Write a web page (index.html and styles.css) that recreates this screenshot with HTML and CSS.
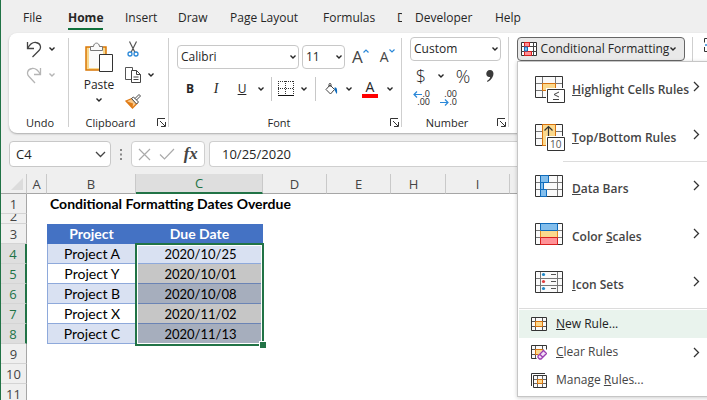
FILE: index.html
```html
<!DOCTYPE html>
<html lang="en">
<head>
<meta charset="utf-8">
<meta name="viewport" content="width=device-width, initial-scale=1">
<title>Conditional Formatting Dates Overdue</title>
<link rel="stylesheet" href="styles.css">
</head>
<body>
<svg class="defs" aria-hidden="true">
  <symbol id="chev" viewBox="0 0 8 6"><path d="M1.500 1.500 4 4l2.500-2.500" fill="none" stroke="currentColor" stroke-width="1.400"/></symbol>
  <symbol id="next" viewBox="0 0 7 11"><path d="m1 1 4.500 4.500L1 10" fill="none" stroke="#333" stroke-width="1.300"/></symbol>
  <symbol id="launch" viewBox="0 0 9 9"><path d="M.5 8V.5H8M3 3l5 5M8.500 4v4.500H4" fill="none" stroke="#333"/></symbol>
  <symbol id="cells" viewBox="0 0 28 22"><path d="M.5.5h27v21H.5z" fill="#fafafa"/><path d="M7.500 1v20M20.500 1v20M1 7.500h26M1 14.500h26" stroke="#777" fill="none"/></symbol>
</svg>
<div class="app">
  <nav class="tabs" aria-label="Ribbon tabs">
    <button>File</button><button class="active">Home</button><button>Insert</button><button>Draw</button><button>Page Layout</button><button>Formulas</button><button class="cut">D</button><button>Developer</button><button>Help</button>
  </nav>

  <main>
  <div class="ribbon">
    <section class="group undo">
      <div class="stack">
        <div class="line">
          <button aria-label="Undo"><svg width="16" height="17" viewBox="0 0 16 17"><path d="M1.500 1v6.500H8M1.500 7.500C4 3 7 1 10 1.500c5 .7 5.500 5.500 3 8L6.500 16" fill="none" stroke="#444" stroke-width="1.300"/></svg></button>
          <button aria-label="Undo history"><svg class="chev"><use href="#chev"/></svg></button>
        </div>
        <div class="line faded">
          <button aria-label="Redo"><svg width="16" height="17" viewBox="0 0 16 17"><path d="M14.500 1v6.500H8M14.500 7.500C12 3 9 1 6 1.500 1 2.200.5 7 3 9.500L9 16" fill="none" stroke="#b5b5b5" stroke-width="1.300"/></svg></button>
          <button aria-label="Redo history"><svg class="chev"><use href="#chev"/></svg></button>
        </div>
      </div>
      <footer>Undo</footer>
    </section>

    <section class="group clipboard">
      <div class="columns">
        <button class="paste">
          <svg width="28" height="31" viewBox="0 0 28 31"><path d="M1 5h20v23H1z" fill="#f8d88e" stroke="#d97706" stroke-width="1.500"/><path d="M4 6h14v20H4z" fill="#fafafa"/><path d="M5.500 8.500v-4h3c.3-4.500 5.700-4.500 6 0h3v4z" fill="#fafafa" stroke="#777"/><path d="M14.500 12.500h13v17h-13z" fill="#fff" stroke="#333"/></svg>
          <span>Paste</span>
          <svg class="chev"><use href="#chev"/></svg>
        </button>
        <div class="stack">
          <div class="line"><button aria-label="Cut"><svg width="16" height="16" viewBox="0 0 16 16"><path d="m4.500.5 5.500 11M11.500.5 6 11.500" fill="none" stroke="#555" stroke-width="1.200"/><g fill="#fff" stroke="#2b88d8" stroke-width="1.300"><circle cx="5" cy="13" r="2"/><circle cx="11" cy="13" r="2"/></g></svg></button></div>
          <div class="line">
            <button aria-label="Copy"><svg width="16" height="16" viewBox="0 0 16 16"><path d="M.5.5h7v12h-7z" fill="#fff" stroke="#555"/><path d="M6.500 3.500h5l4 4v8h-9z" fill="#fff" stroke="#444"/><path d="M11.500 3.500v4h4M8.500 10h5M8.500 12.500h5" fill="none" stroke="#444"/></svg></button>
            <button aria-label="Copy options"><svg class="chev"><use href="#chev"/></svg></button>
          </div>
          <div class="line"><button aria-label="Format Painter"><svg width="16" height="15" viewBox="0 0 16 15"><path d="m1 7 6-2.500 5 5L7.500 14z" fill="#f9c98b" stroke="#e07b16" stroke-width="1.300"/><path d="m1 7 7 2.500L7.500 14" fill="#e07b16"/><path d="m6.500 4.500 2-1.500 5 5-2 2zM10 4.500l4-4 1.500 1.500-4 4" fill="#fff" stroke="#444"/></svg></button></div>
        </div>
      </div>
      <footer>Clipboard</footer>
      <button class="launch" aria-label="Clipboard settings"><svg width="9" height="9"><use href="#launch"/></svg></button>
    </section>

    <section class="group font">
      <div class="fontrow">
        <label class="pick"><select class="w-name" aria-label="Font name"><option>Calibri</option></select><svg class="chev"><use href="#chev"/></svg></label>
        <label class="pick"><select class="w-size" aria-label="Font size"><option>11</option></select><svg class="chev"><use href="#chev"/></svg></label>
        <button class="grow" aria-label="Increase font size">A<svg width="6" height="4" viewBox="0 0 6 4"><path d="m.5 3.500 2.500-2.500 2.500 2.500" fill="none" stroke="#2b88d8" stroke-width="1.200"/></svg></button>
        <button class="shrink" aria-label="Decrease font size">A<svg width="6" height="4" viewBox="0 0 6 4"><path d="m.5.5 2.500 2.500L5.500.5" fill="none" stroke="#2b88d8" stroke-width="1.200"/></svg></button>
      </div>
      <div class="styles">
        <button><b>B</b></button>
        <button><i>I</i></button>
        <button><u>U</u></button>
        <button aria-label="Underline options"><svg class="chev"><use href="#chev"/></svg></button>
        <hr>
        <button aria-label="Borders"><svg width="16" height="16" viewBox="0 0 16 16"><path d="M.5 0v14M15.500 0v14M7.500 0v14M0 .5h16M0 7.500h16" fill="none" stroke="#333" stroke-dasharray="1 1"/><path d="M0 14.500h16" stroke="#111"/></svg></button>
        <button aria-label="Border options"><svg class="chev"><use href="#chev"/></svg></button>
        <hr>
        <button aria-label="Fill color"><svg width="13" height="13" viewBox="0 0 13 13"><path d="m5 2 4.500 4.500-4 4.500L1 6.500zM4 4V1.500c0-1.500 2-1.500 2 0V4" fill="#fff" stroke="#444"/><path d="M9.500 4.500c2-.5 3 1 2.500 6.500-1.500-1-1.500-3-2.500-4z" fill="#0f6cbd"/></svg></button>
        <button aria-label="Fill options"><svg class="chev"><use href="#chev"/></svg></button>
        <button class="ink">A</button>
        <button aria-label="Font color options"><svg class="chev"><use href="#chev"/></svg></button>
      </div>
      <footer>Font</footer>
      <button class="launch" aria-label="Font settings"><svg width="9" height="9"><use href="#launch"/></svg></button>
    </section>

    <section class="group number">
      <label class="pick"><select class="w-format" aria-label="Number format"><option>Custom</option></select><svg class="chev"><use href="#chev"/></svg></label>
      <div class="symbols">
        <button>$</button><button aria-label="Currency options"><svg class="chev"><use href="#chev"/></svg></button><button>%</button><button aria-label="Comma style"><svg width="8" height="13" viewBox="0 0 8 13"><path d="M4 0c5 0 5 8-2.500 12L1 11c2-1.500 3-2.500 3.200-4C-1 8-1 0 4 0z" fill="#3b3b3b"/></svg></button>
      </div>
      <div class="decimals">
        <button aria-label="Increase decimal"><span><svg width="9" height="7" viewBox="0 0 9 7"><path d="M9 3.500H1M4 .5l-3 3 3 3" fill="none" stroke="#2b88d8" stroke-width="1.200"/></svg>.0</span><span>.00</span></button>
        <button aria-label="Decrease decimal"><span>.00</span><span><svg width="9" height="7" viewBox="0 0 9 7"><path d="M0 3.500h8M5 .5l3 3-3 3" fill="none" stroke="#2b88d8" stroke-width="1.200"/></svg>.0</span></button>
      </div>
      <footer>Number</footer>
      <button class="launch" aria-label="Number settings"><svg width="9" height="9"><use href="#launch"/></svg></button>
    </section>

    <section class="group cond">
      <button class="condbtn" aria-expanded="true">
        <svg width="16" height="14" viewBox="0 0 16 14"><path d="M.5.5h15v13H.5z" fill="#fff" stroke="#333"/><path d="M12.500 0v14M0 4.500h16M0 9.500h16" stroke="#444"/><path d="M3.500.5h5v4h-5zM3.500 9.500h7v4h-7z" fill="#ff8f94" stroke="#d92020"/><path d="M3.500 5h3v4h-3z" fill="#83beec" stroke="#0f6cbd"/></svg>
        <span>Conditional Formatting</span>
        <svg class="chev"><use href="#chev"/></svg>
      </button>
      <div class="menu" role="menu">
        <button class="big" role="menuitem">
          <svg width="30" height="27" viewBox="0 0 30 27"><use href="#cells" width="28" height="22"/><path d="M.5.5h27v21H.5z" fill="none" stroke="#333"/><path d="M7.500 7.500h13v7h-13z" fill="#fbd98d" stroke="#d9730d"/><path d="M11 12h19v15H11z" fill="#fff"/><path d="M12.500 13.500h17v13h-17z" fill="#fff" stroke="#333"/><path d="m24 16-5 2.500 5 2.500M18 23.500h6" fill="none" stroke="#444"/></svg>
          <span><u>H</u>ighlight Cells Rules</span><svg class="next"><use href="#next"/></svg>
        </button>
        <button class="big" role="menuitem">
          <svg width="30" height="27" viewBox="0 0 30 27"><use href="#cells" width="28" height="22"/><path d="M.5.5h27v21H.5z" fill="none" stroke="#333"/><path d="M7.500.5h13v21h-13z" fill="#fbd98d" stroke="#d9730d"/><path d="M13.500 12V2.500M9.500 6.500l4-4 4 4" fill="none" stroke="#333" stroke-width="1.200"/><path d="M11 12h19v15H11z" fill="#fff"/><path d="M12.500 13.500h17v13h-17z" fill="#fff" stroke="#333"/><text x="15" y="24" font-size="10" font-weight="400" fill="#555">10</text></svg>
          <span><u>T</u>op/Bottom Rules</span><svg class="next"><use href="#next"/></svg>
        </button>
        <hr class="inset">
        <button class="big" role="menuitem">
          <svg width="30" height="27" viewBox="0 0 30 27"><path d="M.5.5h27v21H.5z" fill="#fafafa" stroke="#333"/><path d="M5.500 1v20M22.500 1v20M1 7.500h26M1 14.500h26" stroke="#777"/><path d="M5.500.5h8v7h-8zM5.500 7.500h3v7h-3zM5.500 14.500h6v7h-6z" fill="#83beec" stroke="#0f6cbd"/></svg>
          <span><u>D</u>ata Bars</span><svg class="next"><use href="#next"/></svg>
        </button>
        <button class="big" role="menuitem">
          <svg width="30" height="27" viewBox="0 0 30 27"><path d="M.5.5h27v21H.5z" fill="#fafafa" stroke="#333"/><path d="M1 7.500h26M1 14.500h26" stroke="#777"/><path d="M5.500 7.500h17v7h-17z" fill="#fbd98d" stroke="#e58a1f"/><path d="M5.500.5h17v7h-17z" fill="#83beec" stroke="#0f6cbd"/><path d="M5.500 14.500h17v7h-17z" fill="#ff9297" stroke="#d92020"/></svg>
          <span>Color <u>S</u>cales</span><svg class="next"><use href="#next"/></svg>
        </button>
        <button class="big" role="menuitem">
          <svg width="30" height="27" viewBox="0 0 30 27"><path d="M.5.5h27v21H.5z" fill="#fafafa" stroke="#333"/><path d="M5.500 1v20M22.500 1v20M1 7.500h26M1 14.500h26" stroke="#777"/><path d="M16 3.500h5M16 10.500h5M16 17.500h5" stroke="#555"/><g fill="#1e88c9"><circle cx="8.500" cy="3.500" r="1.600"/><circle cx="8.500" cy="17.500" r="1.600"/></g><circle cx="8.500" cy="10.500" r="1.600" fill="#e23b3b"/></svg>
          <span><u>I</u>con Sets</span><svg class="next"><use href="#next"/></svg>
        </button>
        <hr>
        <button class="small hot" role="menuitem">
          <svg width="16" height="14" viewBox="0 0 16 14"><path d="M.5.5h15v13H.5z" fill="#fafafa" stroke="#333"/><path d="M4.500 1v12M11.500 1v12M1 4.500h14M1 9.500h14" stroke="#555"/><path d="M4.500 4.500h7v5h-7z" fill="#fbd98d" stroke="#d9730d"/></svg>
          <span><u>N</u>ew Rule...</span>
        </button>
        <button class="small" role="menuitem">
          <svg width="16" height="15" viewBox="0 0 16 15"><path d="M.5.5h15v13H.5z" fill="#fafafa" stroke="#333"/><path d="M4.500 1v12M11.500 1v12M1 4.500h14M1 9.500h14" stroke="#555"/><path d="M4.500 4.500h7v5h-7z" fill="#fbd98d" stroke="#d9730d"/><path d="m5 12 9-9 2 2v10H6z" fill="#fff"/><path d="m7 11 5.500-5.500 3 3L10 14H8.500L7 12.500zM9 9.500l3 3" fill="#f1dcf7" stroke="#9b3fb0" stroke-width="1.300"/></svg>
          <span><u>C</u>lear Rules</span><svg class="next"><use href="#next"/></svg>
        </button>
        <button class="small" role="menuitem">
          <svg width="16" height="15" viewBox="0 0 16 15"><path d="M.5 13V.5H14" fill="none" stroke="#333"/><path d="M2.500 2.500h13v12h-13z" fill="#fafafa" stroke="#333"/><path d="M6.500 3v11M11.500 3v11M3 6.500h12M3 10.500h12" stroke="#666"/><path d="M6.500 6.500h5v4h-5z" fill="#fbd98d" stroke="#d9730d"/></svg>
          <span>Manage <u>R</u>ules...</span>
        </button>
      </div>
    </section>
    <section class="group more">
      <button aria-label="Insert cells"><svg width="16" height="14" viewBox="0 0 16 14"><path d="M15 .5H.5v4M.5 9v4.500H15" fill="none" stroke="#333"/><path d="M1 7h12" stroke="#2b88d8" stroke-width="1.500"/></svg></button>
    </section>
  </div>

  <div class="formulabar">
    <label class="pick namebox"><input value="C4" aria-label="Name box"><svg class="chev wide" viewBox="0 0 11 7"><path d="m1 1 4.500 4.500L10 1" fill="none" stroke="#444" stroke-width="1.300"/></svg></label>
    <svg class="dots" width="2" height="11" viewBox="0 0 2 11"><path d="M0 0h2v2H0zM0 4.500h2v2H0zM0 9h2v2H0z" fill="#888"/></svg>
    <div class="fx">
      <button aria-label="Cancel"><svg width="13" height="13" viewBox="0 0 13 13"><path d="m1 1 11 11M12 1 1 12" fill="none" stroke="#aaa" stroke-width="1.200"/></svg></button>
      <button aria-label="Enter"><svg width="16" height="12" viewBox="0 0 16 12"><path d="m1 6.500 4.500 4.500L15 1" fill="none" stroke="#aaa" stroke-width="1.200"/></svg></button>
      <button class="fn"><i>fx</i></button>
    </div>
    <input class="formula" value="10/25/2020" aria-label="Formula">
  </div>
  </main>

  <table class="sheet">
    <colgroup><col class="c-n"><col class="c-a"><col class="c-b"><col class="c-c"><col class="c-d"><col class="c-d"><col class="c-h"><col class="c-d"><col></colgroup>
    <thead><tr><th class="corner"><svg width="12" height="12" viewBox="0 0 12 12"><path d="M12 0v12H0z" fill="#dcdcdc"/></svg></th><th>A</th><th>B</th><th class="sel">C</th><th>D</th><th>E</th><th class="narrow">H</th><th>I</th><th></th></tr></thead>
    <tbody>
      <tr><th>1</th><td></td><td class="title" colspan="7">Conditional Formatting Dates Overdue</td></tr>
      <tr class="thin"><th><div>2</div></th><td colspan="8"></td></tr>
      <tr><th>3</th><td></td><td class="head">Project</td><td class="head">Due Date</td><td colspan="5"></td></tr>
      <tr class="picked"><th>4</th><td></td><td class="cell band">Project A</td><td class="cell date band first">2020/10/25<span class="selection"></span></td><td colspan="5"></td></tr>
      <tr class="picked"><th>5</th><td></td><td class="cell">Project Y</td><td class="cell date grey">2020/10/01</td><td colspan="5"></td></tr>
      <tr class="picked"><th>6</th><td></td><td class="cell band">Project B</td><td class="cell date steel">2020/10/08</td><td colspan="5"></td></tr>
      <tr class="picked"><th>7</th><td></td><td class="cell">Project X</td><td class="cell date grey">2020/11/02</td><td colspan="5"></td></tr>
      <tr class="picked"><th>8</th><td></td><td class="cell band">Project C</td><td class="cell date steel">2020/11/13</td><td colspan="5"></td></tr>
      <tr><th>9</th><td colspan="8"></td></tr>
      <tr><th>10</th><td colspan="8"></td></tr>
      <tr><th>11</th><td colspan="8"></td></tr>
    </tbody>
  </table>
</div>
</body>
</html>
```
FILE: styles.css
```css
* { box-sizing: border-box; }
body {
  margin: 0;
  overflow: hidden;
  background: #fff;
  color: #262626;
  font: 12px/16px "Open Sans", "Noto Sans", sans-serif;
}
button, input, select { margin: 0; padding: 0; border: 0; background: none; color: inherit; font: inherit; }
button { display: flex; align-items: center; justify-content: center; white-space: nowrap; }
svg { display: block; flex: none; }
.defs { position: absolute; width: 0; height: 0; }
.chev { width: 8px; height: 6px; }
.next { width: 7px; height: 11px; }

.app { min-height: 100vh; overflow: hidden; border-left: 1px solid #217346; }
.tabs, main { background: #efefef; }

.tabs {
  display: grid;
  grid-template-columns: 45px 57px 53px 52px 93px 74px 18px 80px 60px;
  height: 33px;
  padding: 7px 0 3px 22px;
}
.tabs button { justify-content: start; justify-self: start; padding: 0; border-bottom: 2px solid transparent; }
.tabs .active { border-color: #0f703b; font-weight: 700; }
.tabs .cut { width: 5px; overflow: hidden; }

.ribbon {
  display: flex;
  height: 100px;
  margin-left: 8px;
  padding: 5px 0 6px;
  background: #fff;
  border-radius: 8px 0 0 8px;
  box-shadow: 0 1px 2px #aaa;
}
.group { position: relative; display: flex; flex: none; flex-direction: column; border-right: 1px solid #cfcfcf; }
.group footer { margin-top: auto; line-height: 8px; text-align: center; font-size: 11px; }
.launch { position: absolute; right: 2px; bottom: 0; }
.stack { display: flex; flex-direction: column; gap: 4px; }
.line { display: flex; align-items: center; gap: 6px; height: 22px; }
.faded { color: #b5b5b5; }

.undo { width: 60px; padding-left: 17px; }
.undo footer { margin-right: 16px; }
.clipboard { width: 100px; }
.clipboard footer { margin-right: 16px; }
.columns { display: flex; gap: 10px; padding-left: 14px; }
.paste { flex-direction: column; gap: 4px; width: 32px; padding-top: 4px; justify-content: start; }

.font { width: 233px; padding: 7px 0 0 8px; }
.fontrow { display: flex; gap: 3px; height: 24px; }
.pick { position: relative; display: block; align-self: start; }
.pick .chev { position: absolute; right: 2px; top: 9px; }
.pick select, .pick input {
  height: 24px;
  padding-left: 3px;
  border: 1px solid #c8c8c8;
  border-radius: 4px;
  background: #fff;
  appearance: none;
}
.w-name { width: 122px; }
.w-size { width: 43px; }
.w-format { width: 91px; }
.grow, .shrink { align-items: start; line-height: 24px; color: #444; }
.grow svg, .shrink svg { margin-top: 4px; }
.grow { margin-left: 4px; font-size: 17px; }
.shrink { margin-left: 8px; font-size: 14px; }

.styles {
  display: grid;
  grid-template-columns: 26px 26px 26px 12px 8px 22px 14px 8px 24px 12px 30px 10px;
  height: 24px;
  margin-top: 8px;
}
.styles hr { width: 1px; height: 24px; margin: 0 auto; border: 0; background: #c8c8c8; }
.styles i { font-family: "Liberation Serif", serif; font-size: 14px; }
.styles .ink { justify-self: center; align-self: center; width: 16px; height: 18px; border-bottom: 4px solid #f00; font-size: 14px; line-height: 14px; }
.font footer { margin-right: 20px; }

.number { width: 107px; padding-left: 8px; margin-top: -1px; }
.symbols { display: grid; grid-template-columns: 22px 18px 26px 28px; height: 26px; margin-top: 2px; font-size: 18px; font-weight: 300; }
.decimals { display: flex; gap: 10px; margin: 1px 0 0 3px; }
.decimals button { flex-direction: column; width: 17px; align-items: end; font-size: 9px; line-height: 8px; }
.decimals span { display: flex; align-items: center; }
.number footer { margin-right: 24px; }

.cond { width: 184px; padding-left: 8px; margin-top: -1px; }
.condbtn { gap: 4px; width: 168px; height: 24px; padding-right: 4px; border: 1px solid #666; border-radius: 4px; background: #e9e9e9; }
.condbtn .chev { margin-left: -4px; }
.more { padding-left: 11px; border: 0; justify-content: start; }

.menu {
  position: absolute;
  z-index: 2;
  top: 24px;
  left: 8px;
  width: 204px;
  padding: 2px 1px;
  border: 1px solid #c6c6c6;
  background: #fff;
  box-shadow: 0 1px 4px #0003;
}
.menu button { width: 100%; justify-content: start; color: #444; }
.menu .next { position: absolute; right: 20px; }
.menu .big { height: 48px; gap: 7px; padding: 3px 0 0 16px; font-weight: 600; }
.menu .big .next { margin-top: -6px; }
.menu .small { height: 28px; gap: 9px; padding-left: 12px; }
.menu .hot { background: #e9f3ed; color: #222; }
.menu hr { height: 1px; margin: 1px 0; border: 0; background: #dcdcdc; }
.menu .inset { margin-left: 44px; }

.formulabar { display: flex; align-items: center; height: 41px; padding: 1px 0 0 8px; font-size: 13px; }
.namebox { align-self: center; }
.namebox input { width: 102px; height: 26px; padding-left: 6px; }
.namebox .wide { width: 11px; height: 7px; right: 5px; top: 10px; }
.dots { margin: 0 9px; }
.fx { display: flex; align-items: center; justify-content: space-around; width: 74px; height: 26px; padding: 0 2px; border: 1px solid #cfcfcf; border-radius: 4px; background: #fff; }
.fn { font: 700 17px/18px "Liberation Serif", serif; color: #444; }
.formula { flex: 1; min-width: 0; height: 26px; margin-left: 4px; padding-left: 12px; border: 1px solid #cfcfcf; border-right: 0; border-radius: 4px 0 0 4px; background: #fff; }

.sheet { width: 100%; table-layout: fixed; border-collapse: separate; border-spacing: 0; font: 14px/18px Lato, "Open Sans", sans-serif; }
.sheet th, .sheet td { height: 20px; padding: 0; }
.sheet th { background: #efefef; border-right: 1px solid #c9c9c9; color: #444; font: 13px/18px "Open Sans", sans-serif; }
.sheet thead th { border-bottom: 1px solid #a6a6a6; }
.sheet thead .sel { background: #dedede; border-bottom: 2px solid #217346; color: #217346; }
.sheet thead .narrow { padding-right: 9px; }
.sheet tbody th { border-right-color: #a6a6a6; border-bottom: 1px solid #d4d4d4; }
.sheet .thin th, .sheet .thin td { height: 10px; }
.thin div { height: 9px; overflow: hidden; line-height: 4px; }
.sheet .picked th { background: #dedede; border-right: 2px solid #217346; color: #217346; }
.corner svg { margin-left: auto; margin-right: 3px; }
.c-n { width: 26px; }
.c-a { width: 20px; }
.c-b { width: 89px; }
.c-c { width: 127px; }
.c-d { width: 64px; }
.c-h { width: 55px; }
.sheet .title { padding-left: 3px; color: #000; font-weight: 700; }
.head { background: #4472c4; color: #fff; font-weight: 700; text-align: center; }
.cell { border-bottom: 1px solid #8ea9db; color: #000; text-align: center; }
.cell:nth-child(3) { border-left: 1px solid #8ea9db; }
.sheet .date { padding-left: 2px; font-size: 13px; }
.band { background: #d9e1f2; }
.grey { background: #c6c6c6; border-color: #6b84b5; }
.steel { background: #a6aebd; border-color: #6b84b5; }
.first { position: relative; }
.selection { position: absolute; z-index: 1; top: -1px; left: -1px; right: -1px; height: 103px; border: 2px solid #217346; box-shadow: inset 0 0 0 1px #fff; }
.selection::after { content: ""; position: absolute; right: -4px; bottom: -4px; width: 6px; height: 6px; background: #217346; border: solid #fff; border-width: 1px 0 0 1px; }
```
